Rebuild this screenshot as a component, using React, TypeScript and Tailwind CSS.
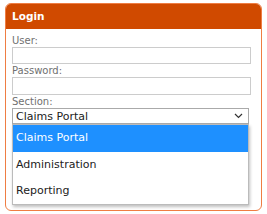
import React from 'react';

const font = { fontFamily: '"DejaVu Sans", Verdana, sans-serif' };

const Chevron = () => (
    <svg width="9" height="6" viewBox="0 0 9 6" fill="none" stroke="#333" strokeWidth={1.2}>
        <path d="M1 1l3.5 3.5L8 1" />
    </svg>
);

const sections = ['Claims Portal', 'Administration', 'Reporting'];
const itemHeights = ['h-[27px]', 'h-[27px]', 'h-[25px]'];

export default function App() {
    return (
        <div className="w-[267px] h-[214px] bg-white pt-[3px] pl-[5px]" style={font}>
            <div className="w-[257px] h-[208px] border border-[#ef7d43] rounded-[6px] overflow-hidden flex flex-col">
                <div className="h-[25px] shrink-0 bg-[#d04a00] flex items-center px-[6px] text-white text-[10.5px] font-bold">
                    Login
                </div>
                <div className="flex flex-col pl-[6px] pt-[5px]">
                    <label className="text-[10px] leading-[13px] text-[#707070]">User:</label>
                    <div className="w-[239px] h-[17px] border border-[#ccc] bg-white" />
                    <label className="text-[10px] leading-[13px] text-[#707070]">Password:</label>
                    <div className="w-[239px] h-[18px] border border-[#ccc] bg-white" />
                    <label className="text-[10px] leading-[13px] text-[#707070]">Section:</label>
                    <div className="relative w-[237px]">
                        <div className="h-[16px] border border-[#aaa] bg-white flex items-center justify-between pl-[3px] pr-[5px] text-[11px] leading-none text-[#222]">
                            <span>Claims Portal</span>
                            <Chevron />
                        </div>
                        <div className="absolute left-0 top-[16px] w-[237px] bg-white border border-[#bbb] shadow-[1px_2px_3px_rgba(0,0,0,0.25)] z-10">
                            {sections.map((s, i) => (
                                <div
                                    key={s}
                                    className={`${itemHeights[i]} flex items-center pl-[3px] text-[11px] ${
                                        i === 0 ? 'bg-[#1e90ff] text-white' : 'text-[#222]'
                                    }`}
                                >
                                    {s}
                                </div>
                            ))}
                        </div>
                    </div>
                </div>
            </div>
        </div>
    );
}
